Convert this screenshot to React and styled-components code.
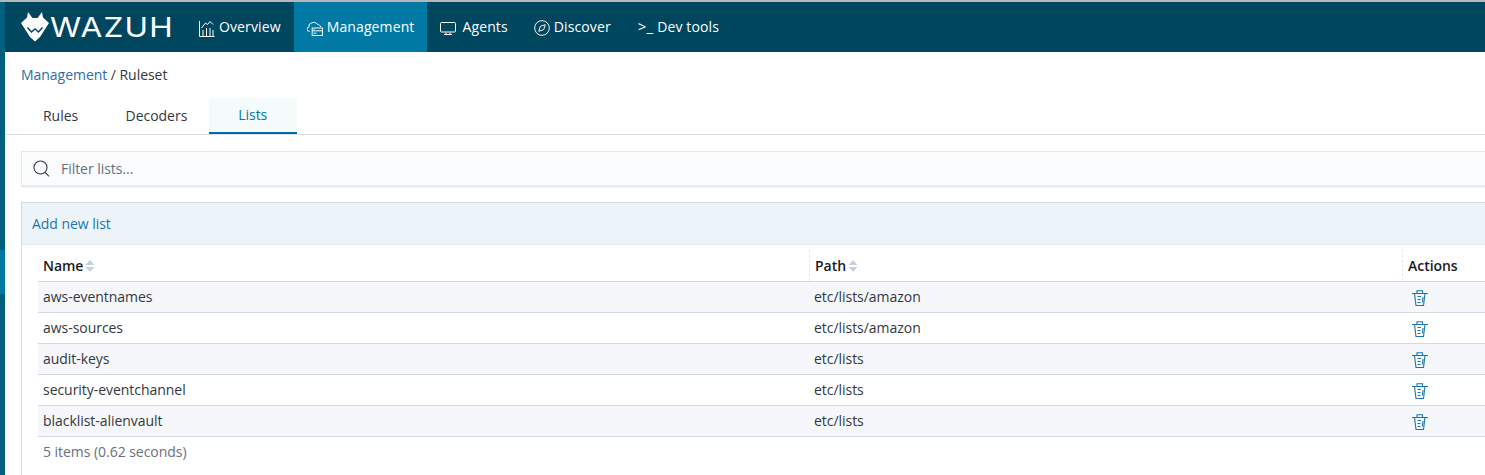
import React from "react";
import styled, { createGlobalStyle } from "styled-components";

const Global = createGlobalStyle`
  html, body { margin: 0; padding: 0; background: #fff; }
  body { font-family: "Open Sans", "Liberation Sans", sans-serif; font-size: 14px; color: #343741; letter-spacing: -0.04px; }
  * { box-sizing: border-box; }
`;

const Page = styled.div`
  width: 1485px;
  height: 475px;
  overflow: hidden;
  display: flex;
  flex-direction: column;
`;
const TopLine = styled.div`
  height: 2px;
  flex: none;
  background: #b4b8ba;
`;
const Body = styled.div`
  flex: 1;
  display: flex;
  min-height: 0;
`;
const Rail = styled.div`
  width: 5px;
  flex: none;
  display: flex;
  flex-direction: column;
  background: #005f7c;
`;
const RailSegment = styled.div`
  height: ${(p) => p.$h}px;
  flex: none;
  background: ${(p) => p.$c};
`;
const Main = styled.div`
  flex: 1;
  min-width: 0;
  display: flex;
  flex-direction: column;
`;
const Nav = styled.nav`
  height: 50px;
  flex: none;
  display: flex;
  align-items: stretch;
  background: #00465f;
  color: #fff;
`;
const Logo = styled.div`
  width: 187px;
  flex: none;
  display: flex;
  align-items: center;
  padding-left: 16px;
  gap: 1px;
`;
const LogoWord = styled.span`
  font-family: "Inter", "Liberation Sans", sans-serif;
  font-size: 27px;
  line-height: 1;
  font-weight: 400;
  letter-spacing: 1px;
  color: #fff;
  transform: scaleX(1.17);
  transform-origin: left center;
`;
const NavItem = styled.div`
  display: flex;
  align-items: center;
  gap: ${(p) => p.$gap ?? 4}px;
  padding: 0 ${(p) => p.$pr ?? 13}px 2px ${(p) => p.$pl ?? 13}px;
  font-size: 14px;
  font-weight: 500;
  letter-spacing: 0.12px;
  background: ${(p) => (p.$active ? "#0079a5" : "transparent")};
  svg { margin-top: 4px; }
`;
const Prompt = styled.span`
  font-family: "Open Sans", sans-serif;
  font-size: 15px;
  font-weight: 400;
`;
const Crumbs = styled.div`
  height: 46px;
  flex: none;
  padding: 13px 0 0 16px;
  line-height: 19px;
  font-size: 14px;
`;
const CrumbLink = styled.span`
  color: #2d6ea8;
`;
const Tabs = styled.div`
  height: 37px;
  flex: none;
  display: flex;
  padding-left: 16px;
  border-bottom: 1px solid #d9dee7;
`;
const Tab = styled.div`
  height: 36px;
  display: flex;
  align-items: center;
  padding: 0 ${(p) => p.$px}px 2px;
  margin-right: ${(p) => p.$mr ?? 0}px;
  font-size: 14px;
  color: ${(p) => (p.$active ? "#0079a5" : "#343741")};
  background: ${(p) => (p.$active ? "#f5fafb" : "transparent")};
  border-bottom: ${(p) => (p.$active ? "2px solid #006bb4" : "0")};
`;
const Content = styled.div`
  width: 1500px;
  padding: 16px 0 0 16px;
  display: flex;
  flex-direction: column;
  gap: 16px;
`;
const SearchBox = styled.div`
  height: 35px;
  display: flex;
  align-items: center;
  gap: 11px;
  padding-left: 11px;
  background: #fbfcfd;
  border: 1px solid #e3e7ee;
  box-shadow: 0 2px 2px -1px rgba(152, 162, 179, 0.35);
  color: #69707d;
  font-size: 14px;
`;
const Panel = styled.section`
  border: 1px solid #d3dae6;
  border-bottom: 0;
  padding-bottom: 14px;
`;
const PanelHead = styled.div`
  height: 42px;
  display: flex;
  align-items: center;
  padding-left: 10px;
  background: #ecf4fa;
  border-bottom: 1px solid #dde9f3;
  color: #1f76ab;
  font-size: 14px;
`;
const Table = styled.div`
  margin-left: 16px;
`;
const Row = styled.div`
  display: grid;
  grid-template-columns: 771px 593px 1fr;
  height: ${(p) => (p.$head ? 37 : 31)}px;
  align-items: stretch;
  border-bottom: 1px solid #d3dae6;
  background: ${(p) => (p.$shade ? "#f5f7fa" : "#fff")};
`;
const HeadCell = styled.div`
  display: flex;
  align-items: center;
  gap: 2px;
  padding-left: 5px;
  font-weight: 600;
  font-size: 14px;
  color: #1a1c21;
  margin: 5px 0 0;
  ${(p) => p.$divider && "border-left: 1px dashed #e6e9ef;"}
`;
const Cell = styled.div`
  display: flex;
  align-items: center;
  padding: 0 0 2px ${(p) => p.$pl ?? 5}px;
  font-size: 14px;
  color: #343741;
  svg { margin-top: 4px; }
`;
const Footer = styled.div`
  padding: 5px 0 0 21px;
  font-size: 14px;
  line-height: 19px;
  color: #69707d;
`;

const Wolf = () => (
  <svg width="28" height="30" viewBox="0 0 28 30" aria-hidden="true" style={{ flex: "none" }}>
    <path
      fill="#fff"
      d="M0 11L6 5.500 7 0l4.500 6h5L21 0l1 5.500L28 11 19 25l-5 4.500L9 25z"
    />
    <path
      fill="none"
      stroke="#00465f"
      strokeWidth="1.500"
      d="M6.500 15.500l4 4.500 3.500-3 3.500 3 4-4.500"
    />
  </svg>
);
const OverviewIcon = () => (
  <svg width="16" height="17" viewBox="0 0 16 17" fill="none" stroke="#fff" strokeWidth="1" aria-hidden="true">
    <path d="M.5 1v15.500h15" />
    <path d="M2.500 8l4-5 2 1.500 2.500-3 3 3" />
    <path d="M4 10v6M7.500 8v8M11 8v8M14 10v6" />
  </svg>
);
const ManagementIcon = () => (
  <svg width="16" height="16" viewBox="0 0 17 17" fill="none" stroke="#fff" strokeWidth="1" aria-hidden="true">
    <path d="M3 12H2.500a2 2 0 0 1-.5-4.500 4 4 0 0 1 3-4.500 4.500 4.500 0 0 1 6 1.500c1.500 0 3 1 3.500 3" />
    <rect x="5.500" y="8.500" width="11" height="8" />
    <path d="M5.500 11.500h11M7 14h3M7 10h1" />
  </svg>
);
const MonitorIcon = () => (
  <svg width="16" height="15" viewBox="0 0 16 15" fill="none" stroke="#fff" strokeWidth="1" aria-hidden="true">
    <rect x=".5" y="1.500" width="15" height="9.500" rx="1" />
    <path d="M6 11.500v2M10 11.500v2M4 13.500h8" />
  </svg>
);
const CompassIcon = () => (
  <svg width="16" height="16" viewBox="0 0 17 17" fill="none" stroke="#fff" strokeWidth="1" aria-hidden="true">
    <circle cx="8.500" cy="8.500" r="7.800" />
    <path d="M12 5l-1.700 5.300L5 12l1.700-5.300z" />
  </svg>
);
const SearchIcon = () => (
  <svg width="17" height="17" viewBox="0 0 17 17" fill="none" stroke="#343741" strokeWidth="1.100" aria-hidden="true">
    <circle cx="7.500" cy="7.500" r="6.500" />
    <path d="M12 12.300l4 4" />
  </svg>
);
const TrashIcon = () => (
  <svg width="16" height="16" viewBox="0 0 16 16" fill="none" stroke="#1a76b4" strokeWidth="1.100" aria-hidden="true">
    <path d="M0 3.500h16M5 3.500V.8h5.500v2.700" />
    <path d="M2.500 3.500l1.500 12h7.500l1.500-12" />
    <path d="M5.500 6.500h3.500M5.500 9.500h3M5.500 12.500h3M11 7l-.5 5.500" />
  </svg>
);
const Sort = () => (
  <svg width="10" height="12" viewBox="0 0 10 12" aria-hidden="true">
    <path fill="#c6d0df" d="M5 0l4.500 5h-9zM5 12L.5 7h9z" />
  </svg>
);

const rows = [
  ["aws-eventnames", "etc/lists/amazon"],
  ["aws-sources", "etc/lists/amazon"],
  ["audit-keys", "etc/lists"],
  ["security-eventchannel", "etc/lists"],
  ["blacklist-alienvault", "etc/lists"],
];

export default function App() {
  return (
    <Page>
      <Global />
      <TopLine />
      <Body>
        <Rail>
          <RailSegment $h={248} $c="#005f7c" />
          <RailSegment $h={44} $c="#0079a5" />
        </Rail>
        <Main>
          <Nav>
            <Logo>
              <Wolf />
              <LogoWord>WAZUH</LogoWord>
            </Logo>
            <NavItem $pl={7}><OverviewIcon />Overview</NavItem>
            <NavItem $active><ManagementIcon />Management</NavItem>
            <NavItem $gap={6}><MonitorIcon />Agents</NavItem>
            <NavItem $pr={14}><CompassIcon />Discover</NavItem>
            <NavItem $gap={4}><Prompt>&gt;_</Prompt>Dev tools</NavItem>
          </Nav>
          <Crumbs><CrumbLink>Management</CrumbLink> / Ruleset</Crumbs>
          <Tabs>
            <Tab $px={22} $mr={4}>Rules</Tab>
            <Tab $px={21.5}>Decoders</Tab>
            <Tab $px={29.5} $active>Lists</Tab>
          </Tabs>
          <Content>
            <SearchBox><SearchIcon />Filter lists...</SearchBox>
            <Panel>
              <PanelHead>Add new list</PanelHead>
              <Table>
                <Row $head>
                  <HeadCell>Name<Sort /></HeadCell>
                  <HeadCell $divider>Path<Sort /></HeadCell>
                  <HeadCell $divider>Actions</HeadCell>
                </Row>
                {rows.map(([name, path], i) => (
                  <Row key={name} $shade={i % 2 === 0}>
                    <Cell>{name}</Cell>
                    <Cell>{path}</Cell>
                    <Cell $pl={10}><TrashIcon /></Cell>
                  </Row>
                ))}
              </Table>
              <Footer>5 items (0.62 seconds)</Footer>
            </Panel>
          </Content>
        </Main>
      </Body>
    </Page>
  );
}
